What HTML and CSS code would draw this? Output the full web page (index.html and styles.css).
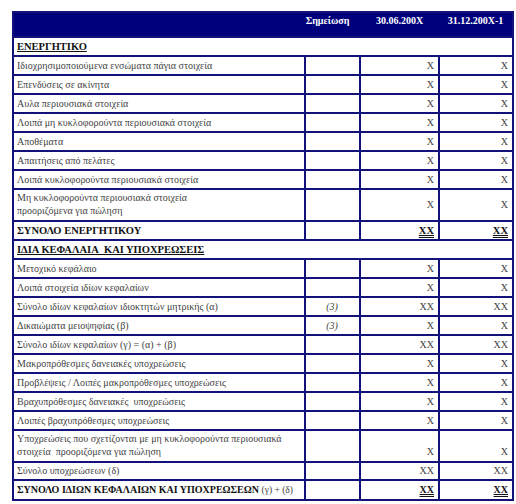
FILE: index.html
```html
<!DOCTYPE html>
<html lang="el">
<head>
    <meta charset="UTF-8">
    <title>Κατάσταση Οικονομικής Θέσης</title>
    <link rel="stylesheet" href="styles.css">
</head>
<body>
<table class="balance">
    <colgroup>
        <col class="c-label">
        <col class="c-note">
        <col class="c-cur">
        <col class="c-prev">
    </colgroup>
    <thead>
    <tr>
        <th></th>
        <th class="h-note">Σημείωση</th>
        <th>30.06.200X</th>
        <th>31.12.200X-1</th>
    </tr>
    </thead>
    <tbody>
    <tr class="section"><td colspan="4"><u>ΕΝΕΡΓΗΤΙΚΟ</u></td></tr>
    <tr><td>Ιδιοχρησιμοποιούμενα ενσώματα πάγια στοιχεία</td><td></td><td class="num">X</td><td class="num">X</td></tr>
    <tr><td>Επενδύσεις σε ακίνητα</td><td></td><td class="num">X</td><td class="num">X</td></tr>
    <tr><td>Αυλα περιουσιακά στοιχεία</td><td></td><td class="num">X</td><td class="num">X</td></tr>
    <tr><td>Λοιπά μη κυκλοφορούντα περιουσιακά στοιχεία</td><td></td><td class="num">X</td><td class="num">X</td></tr>
    <tr><td>Αποθέματα</td><td></td><td class="num">X</td><td class="num">X</td></tr>
    <tr><td>Απαιτήσεις από πελάτες</td><td></td><td class="num">X</td><td class="num">X</td></tr>
    <tr><td>Λοιπά κυκλοφορούντα περιουσιακά στοιχεία</td><td></td><td class="num">X</td><td class="num">X</td></tr>
    <tr class="double"><td>Μη κυκλοφορούντα περιουσιακά στοιχεία<br>προοριζόμενα για πώληση</td><td></td><td class="num">X</td><td class="num">X</td></tr>
    <tr class="total"><td>ΣΥΝΟΛΟ ΕΝΕΡΓΗΤΙΚΟΥ</td><td></td><td class="num"><u>XX</u></td><td class="num"><u>XX</u></td></tr>
    <tr class="section"><td colspan="4"><u>ΙΔΙΑ ΚΕΦΑΛΑΙΑ&nbsp; ΚΑΙ ΥΠΟΧΡΕΩΣΕΙΣ</u></td></tr>
    <tr><td>Μετοχικό κεφάλαιο</td><td></td><td class="num">X</td><td class="num">X</td></tr>
    <tr><td>Λοιπά στοιχεία ιδίων κεφαλαίων</td><td></td><td class="num">X</td><td class="num">X</td></tr>
    <tr><td>Σύνολο ιδίων κεφαλαίων ιδιοκτητών μητρικής (α)</td><td class="note">(3)</td><td class="num">XX</td><td class="num">XX</td></tr>
    <tr><td>Δικαιώματα μειοψηφίας (β)</td><td class="note">(3)</td><td class="num">X</td><td class="num">X</td></tr>
    <tr><td>Σύνολο ιδίων κεφαλαίων (γ) = (α) + (β)</td><td></td><td class="num">XX</td><td class="num">XX</td></tr>
    <tr><td>Μακροπρόθεσμες δανειακές υποχρεώσεις</td><td></td><td class="num">X</td><td class="num">X</td></tr>
    <tr><td>Προβλέψεις / Λοιπές μακροπρόθεσμες υποχρεώσεις</td><td></td><td class="num">X</td><td class="num">X</td></tr>
    <tr><td>Βραχυπρόθεσμες δανειακές&nbsp; υποχρεώσεις</td><td></td><td class="num">X</td><td class="num">X</td></tr>
    <tr><td>Λοιπές βραχυπρόθεσμες υποχρεώσεις</td><td></td><td class="num">X</td><td class="num">X</td></tr>
    <tr class="double low"><td>Υποχρεώσεις που σχετίζονται με μη κυκλοφορούντα περιουσιακά<br>στοιχεία&nbsp; προοριζόμενα για πώληση</td><td></td><td class="num">X</td><td class="num">X</td></tr>
    <tr class="short"><td>Σύνολο υποχρεώσεων (δ)</td><td></td><td class="num">XX</td><td class="num">XX</td></tr>
    <tr class="total grand"><td>ΣΥΝΟΛΟ ΙΔΙΩΝ ΚΕΦΑΛΑΙΩΝ ΚΑΙ ΥΠΟΧΡΕΩΣΕΩΝ <span class="plain">(γ) + (δ)</span></td><td></td><td class="num"><u>XX</u></td><td class="num"><u>XX</u></td></tr>
    </tbody>
</table>
</body>
</html>
```

FILE: styles.css
```css
*{
    margin: 0;
    padding: 0;
}
body{
    background-color: #fff;
    padding: 11px 4px 0 12px;
    font-family: "Liberation Serif", "DejaVu Serif", "Times New Roman", serif;
    font-size: 10px;
    color: #3f3f3f;
}
.balance{
    width: 500px;
    border-collapse: collapse;
    table-layout: fixed;
    border: 2px solid #12127a;
}
.c-label{ width: 292px; }
.c-note{ width: 55px; }
.c-cur{ width: 79px; }
.c-prev{ width: 74px; }

.balance th{
    height: 21px;
    padding: 2px 0 0 0;
    vertical-align: top;
    background-color: #00007c;
    color: #fff;
    font-size: 10px;
    font-weight: bold;
    text-align: center;
    line-height: 12px;
}
.balance th.h-note{
    padding-right: 10px;
}
.balance td{
    height: 13px;
    padding: 2px 4px 2px 3px;
    border: 2px solid #12127a;
    line-height: 13px;
    vertical-align: top;
}
.balance .num{
    text-align: right;
}
.balance .note{
    text-align: center;
    font-style: italic;
}
.double td{
    height: 26px;
    padding-top: 1px;
    padding-bottom: 3px;
}
.double td.num{
    vertical-align: middle;
}
.low td.num{
    vertical-align: bottom;
}
.short td{
    height: 11px;
    padding-top: 1px;
}
.section td,
.total td{
    font-weight: bold;
    font-size: 10.5px;
    color: #111;
    white-space: nowrap;
}
.grand td{
    font-size: 10px;
}
.total td.num u{
    text-decoration-style: double;
}
.plain{
    font-weight: normal;
    font-size: 9.5px;
    color: #3f3f3f;
}
```
